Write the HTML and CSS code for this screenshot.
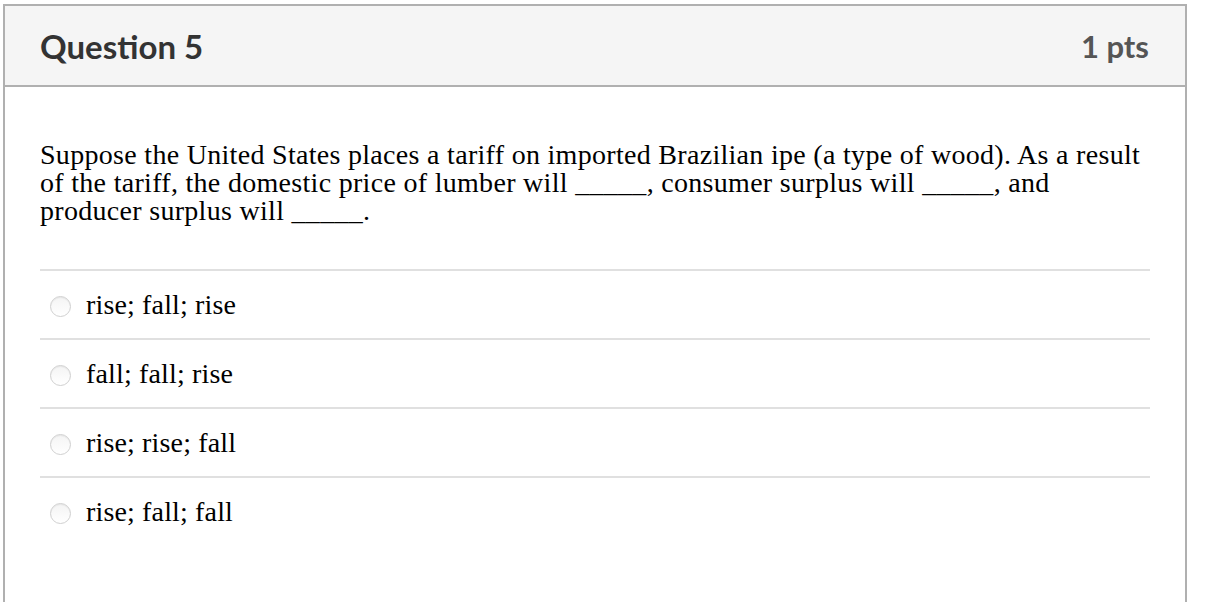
FILE: index.html
```html
<!DOCTYPE html>
<html>
<head>
<meta charset="utf-8">
<link rel="stylesheet" href="styles.css">
</head>
<body>
<div class="card">
  <div class="header">
    <h2 class="title">Question 5</h2>
    <span class="pts">1 pts</span>
  </div>
  <div class="content">
    <p class="question">Suppose the United States places a tariff on imported Brazilian ipe (a type of wood). As a result<br>of the tariff, the domestic price of lumber will _____, consumer surplus will _____, and<br>producer surplus will _____.</p>
    <div class="answers">
      <label class="answer"><span class="radio"></span><span class="label">rise; fall; rise</span></label>
      <label class="answer"><span class="radio"></span><span class="label">fall; fall; rise</span></label>
      <label class="answer"><span class="radio"></span><span class="label">rise; rise; fall</span></label>
      <label class="answer"><span class="radio"></span><span class="label">rise; fall; fall</span></label>
    </div>
  </div>
</div>
</body>
</html>
```
FILE: styles.css
```css
html, body {
  margin: 0;
  padding: 0;
  background: #fff;
}
body {
  padding: 4px 0 0 3px;
}
.card {
  width: 1184px;
  box-sizing: border-box;
  border: 2px solid #b0b0b0;
  border-bottom: none;
  height: 600px;
}
.header {
  display: flex;
  align-items: center;
  justify-content: space-between;
  height: 79px;
  background: #f5f5f5;
  border-bottom: 2px solid #b0b0b0;
  padding: 0 36px 0 35px;
  font-family: Lato, "Open Sans", sans-serif;
  font-weight: 700;
}
.title {
  margin: 0;
  font-size: 33px;
  font-weight: 700;
  color: #333;
}
.pts {
  font-size: 31px;
  color: #555;
}
.content {
  padding: 54px 35px 0 35px;
  font-family: "Liberation Serif", "Times New Roman", serif;
  color: #000;
}
.question {
  margin: 0 0 44px 0;
  font-size: 28px;
  line-height: 28px;
  letter-spacing: 0.3px;
  white-space: nowrap;
}
.answers {
  display: flex;
  flex-direction: column;
}
.answer {
  display: flex;
  align-items: center;
  height: 67px;
  border-top: 2px solid #e0e0e0;
  font-size: 28px;
  letter-spacing: 0.15px;
  padding-left: 10px;
}
.radio {
  width: 19px;
  height: 19px;
  border-radius: 50%;
  border: 1px solid #d0d0d0;
  background: linear-gradient(#f4f4f4, #fff);
  box-shadow: inset 0 1px 1px rgba(0,0,0,0.06);
  margin: 4px 15px 0 0;
  flex: none;
}
.label {
  line-height: 28px;
}
```
